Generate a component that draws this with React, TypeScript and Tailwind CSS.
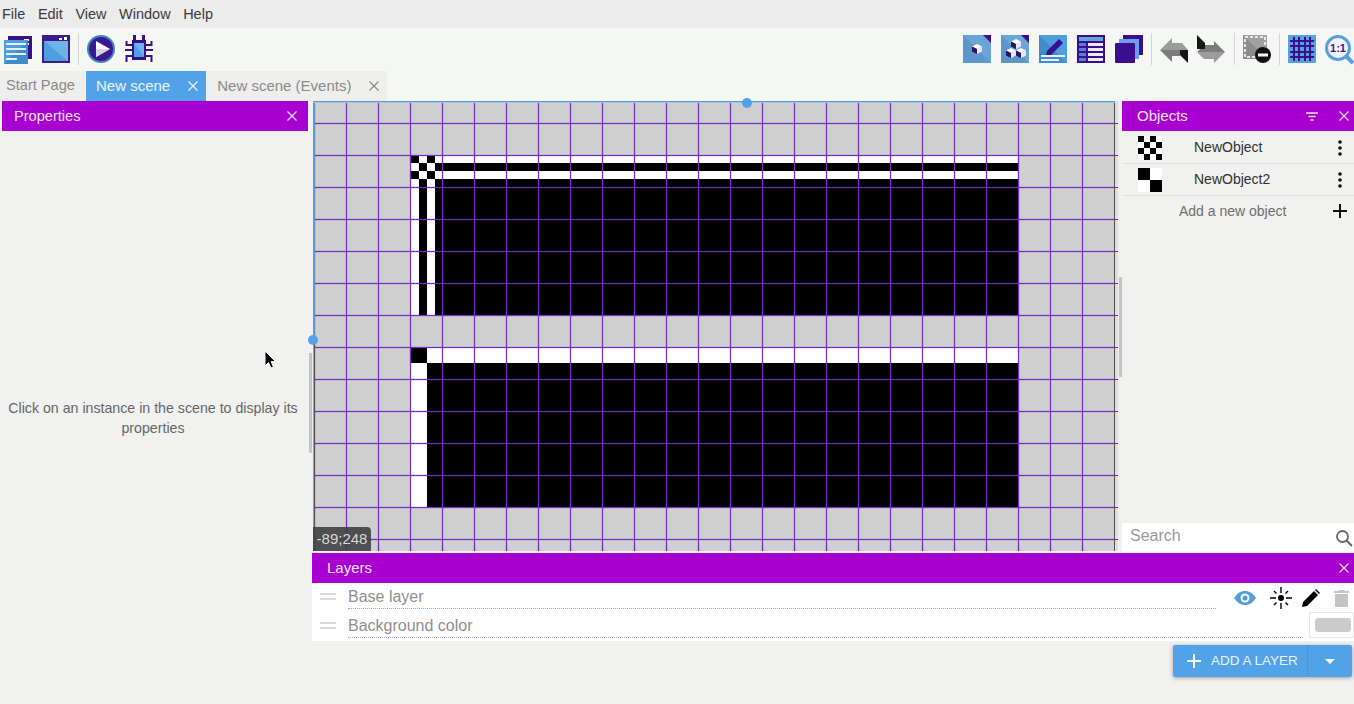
import type { ReactNode } from 'react';

const font = { fontFamily: '"Liberation Sans", Arial, sans-serif' };

const menuItems = ['File', 'Edit', 'View', 'Window', 'Help'];

function Icon({ children }: { children: ReactNode }) {
  return (
    <svg width="28" height="28" viewBox="0 0 28 28" className="shrink-0 overflow-visible">
      {children}
    </svg>
  );
}

function Sep() {
  return <div className="h-8 w-px shrink-0 bg-[#d4d6d4]" />;
}

function ToolTile({ children }: { children?: ReactNode }) {
  return (
    <Icon>
      <rect width="28" height="28" fill="#6aa5d6" />
      <polygon points="0,0 28,28 0,28" fill="#5b97ca" />
      <polygon points="20,0 28,0 28,8" fill="#3a0f8e" />
      {children}
    </Icon>
  );
}

function Cube({ x, y }: { x: number; y: number }) {
  return (
    <g transform={`translate(${x} ${y})`}>
      <polygon points="5,0 10,2.5 5,5 0,2.5" fill="#fff" />
      <polygon points="0,2.5 5,5 5,10 0,7.5" fill="#2c1168" />
      <polygon points="10,2.5 5,5 5,10 10,7.5" fill="#e8e8f4" />
    </g>
  );
}

function LeftTools() {
  return (
    <div className="flex items-center">
      <div className="ml-1 flex gap-[10px]">
        <Icon>
          <rect x="4" y="1" width="24" height="23" fill="#3a0f8e" />
          <rect x="20" y="4" width="5" height="2" fill="#fff" />
          <rect x="20" y="8" width="5" height="2" fill="#fff" />
          <rect x="0" y="5" width="24" height="24" fill="#4f9fe0" />
          <polygon points="24,5 24,29 0,29" fill="#3f8ccc" />
          <rect x="2" y="8" width="20" height="2" fill="#e6f2fb" />
          <rect x="2" y="13" width="20" height="2" fill="#e6f2fb" />
          <rect x="2" y="18" width="20" height="2" fill="#e6f2fb" />
          <rect x="2" y="23" width="11" height="2" fill="#e6f2fb" />
        </Icon>
        <Icon>
          <rect width="28" height="28" fill="#3d1a8e" />
          <rect x="2" y="6" width="24" height="20" fill="#6fb3e8" />
          <polygon points="2,6 26,26 2,26" fill="#4f9fe0" />
          <rect x="17" y="3" width="3" height="2" fill="#fff" />
          <rect x="22" y="2" width="3" height="3" fill="#fff" />
        </Icon>
      </div>
      <div className="mx-2 h-8 w-px bg-[#d4d6d4]" />
      <div className="flex gap-[10px]">
        <Icon>
          <circle cx="14" cy="14" r="14" fill="#3f84c4" />
          <circle cx="14" cy="14" r="12" fill="#3a1a8c" />
          <polygon points="9,6 23,14 9,22" fill="#fff" />
          <polygon points="9,14 23,14 9,22" fill="#d8cfe8" />
        </Icon>
        <Icon>
          <rect x="8" y="0" width="3" height="6" fill="#3a0f8e" />
          <rect x="17" y="0" width="3" height="6" fill="#3a0f8e" />
          <path d="M7 10H1.500V6M21 10h5.500V6M7 15H0M21 15h7M7 21H1.500v6M21 21h5.500v6" fill="none" stroke="#3a0f8e" strokeWidth="2" />
          <rect x="7" y="5" width="14" height="20" fill="#3a0f8e" />
          <rect x="9" y="8" width="10" height="14" fill="#4f9fe0" />
          <polygon points="9,8 19,8 19,22" fill="#6fb3e8" />
        </Icon>
      </div>
    </div>
  );
}

function RightTools() {
  return (
    <div className="flex items-center pr-px">
      <div className="flex gap-[10px]">
        <ToolTile>
          <Cube x={9} y={9} />
        </ToolTile>
        <ToolTile>
          <Cube x={10} y={4} />
          <Cube x={5} y={13} />
          <Cube x={15} y={13} />
        </ToolTile>
        <Icon>
          <rect width="28" height="28" fill="#4f9fe0" />
          <polygon points="0,0 28,28 0,28" fill="#3f8ccc" />
          <polygon points="8,16 20,4 24,8 12,20 7,21" fill="#3a0f8e" />
          <rect x="2" y="20" width="24" height="2" fill="#e6f2fb" />
          <rect x="2" y="24" width="18" height="2" fill="#e6f2fb" />
        </Icon>
        <Icon>
          <rect width="28" height="28" fill="#3a0f8e" />
          <rect x="2" y="2" width="24" height="4" fill="#6aa5d6" />
          <rect x="2" y="8" width="7" height="3" fill="#5b7fd6" />
          <rect x="2" y="13" width="7" height="3" fill="#5b7fd6" />
          <rect x="2" y="18" width="7" height="3" fill="#5b7fd6" />
          <rect x="2" y="23" width="7" height="3" fill="#5b7fd6" />
          <rect x="11" y="8" width="15" height="3" fill="#f0e8fa" />
          <rect x="11" y="13" width="15" height="3" fill="#f0e8fa" />
          <rect x="11" y="18" width="15" height="3" fill="#f0e8fa" />
          <rect x="11" y="23" width="15" height="3" fill="#f0e8fa" />
        </Icon>
        <Icon>
          <rect x="8" y="0" width="20" height="20" fill="#3a0f8e" />
          <rect x="4" y="4" width="20" height="20" fill="#6f9fe8" />
          <rect x="0" y="8" width="20" height="20" rx="1" fill="#3a0f8e" />
        </Icon>
      </div>
      <div className="mx-[8px]"><Sep /></div>
      <div className="flex gap-[9px]">
        <Icon>
          <polygon points="0,15 12,3 12,8 22,8 28,15" fill="#9c9c9c" />
          <polygon points="0,15 20,15 20,21 12,21 12,27" fill="#7c7c7c" />
          <polygon points="20,15 28,15 28,28 20,20" fill="#161616" />
        </Icon>
        <Icon>
          <polygon points="0,17 7,10 17,10 17,6 28,17" fill="#7c7c7c" />
          <polygon points="0,17 28,17 17,28 17,24 7,24" fill="#9c9c9c" />
          <polygon points="0,0 8,8 8,14 0,14" fill="#161616" />
        </Icon>
      </div>
      <div className="ml-[9px] mr-[8px]"><Sep /></div>
      <Icon>
        <rect width="24" height="24" fill="#8c8c8c" />
        <polygon points="0,0 24,0 24,24" fill="#a0a0a0" />
        <rect x="2" y="2" width="20" height="20" fill="none" stroke="#e8e8e8" strokeWidth="2" strokeDasharray="3 2" />
        <circle cx="20" cy="20" r="8" fill="#111" />
        <rect x="15" y="18.500" width="10" height="3" fill="#fff" />
      </Icon>
      <div className="mx-[8px]"><Sep /></div>
      <div className="flex gap-[9px]">
        <Icon>
          <rect width="28" height="28" fill="#5aa0e0" />
          <path d="M6 2v24M11 2v24M17 2v24M22 2v24M2 6h24M2 11h24M2 17h24M2 22h24" stroke="#3a0f8e" strokeWidth="2" />
        </Icon>
        <Icon>
          <circle cx="13" cy="13" r="11.500" fill="#f4f2fa" stroke="#5aa0e0" strokeWidth="3" />
          <path d="M21 21l7 7" stroke="#5aa0e0" strokeWidth="4" />
          <text x="13" y="17" textAnchor="middle" fontSize="11" fontWeight="700" fill="#3a1a8c" style={font}>1:1</text>
        </Icon>
      </div>
    </div>
  );
}

function CloseIcon({ className }: { className: string }) {
  return (
    <svg width="10" height="10" viewBox="0 0 10 10" className={className}>
      <path d="M0.500 0.500l9 9M9.500 0.500l-9 9" stroke="currentColor" strokeWidth="1.200" fill="none" />
    </svg>
  );
}

function PanelHeader({ title, inset, children }: { title: string; inset: string; children?: ReactNode }) {
  return (
    <div className="flex h-[30px] shrink-0 items-center justify-between bg-[#a800d0] text-[15px] text-[#f4e4f8]">
      <span className={inset}>{title}</span>
      <div className="flex items-center">{children}</div>
    </div>
  );
}

function Tab({ label, active, closable }: { label: string; active?: boolean; closable?: boolean }) {
  return (
    <div className={`flex h-[30px] items-center ${active ? 'bg-[#52a2e8] text-[#eaf4fc]' : 'bg-[#eeeeec] text-[#8a8a8a]'} ${closable ? '' : 'w-[86px] text-[14.600px]'}`}>
      <span className={active ? 'ml-[10px]' : closable ? 'ml-[11px]' : 'ml-[6px]'}>{label}</span>
      {closable && <CloseIcon className="ml-[18px] mr-[8px]" />}
    </div>
  );
}

function SceneCanvas() {
  const verticals = Array.from({ length: 25 }, (_, i) => 314.5 + i * 32);
  const horizontals = Array.from({ length: 14 }, (_, i) => 123.5 + i * 32);
  return (
    <svg width="805" height="450" viewBox="313 101 805 450" className="ml-px block shrink-0">
      <rect x="313" y="101" width="805" height="450" fill="#cfcfcf" />

      {/* first sprite, tiled */}
      <rect x="411" y="155" width="607" height="160" fill="#000" />
      <rect x="411" y="155" width="607" height="8" fill="#fff" />
      <rect x="411" y="171" width="607" height="8" fill="#fff" />
      <rect x="411" y="155" width="8" height="160" fill="#fff" />
      <rect x="427" y="155" width="8" height="160" fill="#fff" />
      <rect x="411" y="155" width="8" height="8" fill="#000" />
      <rect x="427" y="155" width="8" height="8" fill="#000" />
      <rect x="419" y="163" width="8" height="8" fill="#000" />
      <rect x="411" y="171" width="8" height="8" fill="#000" />
      <rect x="427" y="171" width="8" height="8" fill="#000" />
      <rect x="419" y="179" width="8" height="136" fill="#000" />

      {/* second sprite, tiled */}
      <rect x="411" y="347" width="607" height="160" fill="#000" />
      <rect x="427" y="347" width="591" height="16" fill="#fff" />
      <rect x="411" y="363" width="16" height="144" fill="#fff" />

      {/* grid, soft edge as in the reference */}
      {verticals.map((x) => (
        <line key={x} x1={x} y1="101" x2={x} y2="551" stroke="#7030c8" strokeOpacity="0.12" strokeWidth="3" />
      ))}
      {horizontals.map((y) => (
        <line key={y} x1="313" y1={y} x2="1118" y2={y} stroke="#7030c8" strokeOpacity="0.12" strokeWidth="3" />
      ))}
      {verticals.map((x) => (
        <line key={x} x1={x} y1="101" x2={x} y2="551" stroke="#7030c8" />
      ))}
      {horizontals.map((y) => (
        <line key={y} x1="313" y1={y} x2="1118" y2={y} stroke="#7030c8" />
      ))}

      <rect x="1114" y="101" width="1" height="450" fill="#505050" />
      <rect x="1115" y="101" width="3" height="450" fill="#dedede" />
      <path d="M1115 123.500h3M1115 155.500h3M1115 187.500h3M1115 219.500h3M1115 251.500h3M1115 283.500h3M1115 315.500h3M1115 347.500h3M1115 379.500h3M1115 411.500h3M1115 443.500h3M1115 475.500h3M1115 507.500h3M1115 539.500h3" stroke="#7030c8" />
      <rect x="313" y="340" width="1" height="211" fill="#7fa5c4" />
      <rect x="314" y="340" width="1" height="211" fill="#505050" />
      <rect x="313" y="101" width="2" height="239" fill="#5a9ad2" />
      <rect x="313" y="101" width="802" height="1" fill="#5a9ad2" />
      <rect x="313" y="102" width="802" height="1" fill="#a8c4da" />
    </svg>
  );
}

function ObjectRow({ name, sprite }: { name: string; sprite: ReactNode }) {
  return (
    <div className="flex h-8 items-center border-b border-[#e0e0e0]">
      <svg width="24" height="24" viewBox="0 0 24 24" className="ml-[16px] shrink-0">{sprite}</svg>
      <span className="ml-[32px] flex-1 text-[14px] text-[#303030]">{name}</span>
      <svg width="4" height="16" viewBox="0 0 4 16" className="mr-[12px]">
        <circle cx="2" cy="2" r="1.800" fill="#111" />
        <circle cx="2" cy="8" r="1.800" fill="#111" />
        <circle cx="2" cy="14" r="1.800" fill="#111" />
      </svg>
    </div>
  );
}

function LayerRow({ label, width, children }: { label: string; width: string; children: ReactNode }) {
  return (
    <div className="flex h-[29px] items-start">
      <div className="ml-2 mt-[10px] flex w-4 flex-col gap-[3px]">
        <div className="h-[2px] bg-[#d8d8d8]" />
        <div className="h-[2px] bg-[#d8d8d8]" />
      </div>
      <div className={`ml-3 h-[26px] border-b border-dotted border-[#a8a8a8] text-[16px] leading-[28px] text-[#8e8e8e] ${width}`}>{label}</div>
      {children}
    </div>
  );
}

export default function App() {
  return (
    <div className="relative flex h-[704px] w-[1354px] flex-col overflow-hidden bg-[#f1f1ef]" style={font}>
      <div className="flex h-[28px] shrink-0 items-center gap-[12.500px] bg-[#ececec] pl-[2px] pt-[2px] text-[14.500px] text-[#3a3a3a]">
        {menuItems.map((item) => (
          <span key={item}>{item}</span>
        ))}
      </div>

      <div className="flex h-[42px] shrink-0 items-center justify-between bg-[#f5f7f5]">
        <LeftTools />
        <RightTools />
      </div>

      <div className="flex h-[31px] shrink-0 items-end bg-[#f5f7f5] text-[15px]">
        <Tab label="Start Page" />
        <Tab label="New scene" active closable />
        <Tab label="New scene (Events)" closable />
      </div>

      <div className="flex min-h-0 flex-1 bg-[#f1f1ef]">
        <div className="ml-[2px] flex w-[306px] shrink-0 flex-col">
          <PanelHeader title="Properties" inset="pl-[12px] pt-[2px] text-[14.600px]">
            <CloseIcon className="mr-[11px]" />
          </PanelHeader>
          <div className="flex flex-1 items-center justify-center pl-[5px] pr-[9px] pt-[1px] text-center text-[14.200px] leading-[20px] text-[#666]">
            <p>Click on an instance in the scene to display its properties</p>
          </div>
        </div>

        <div className="flex w-[4px] shrink-0 flex-col items-center pt-[252px]">
          <div className="h-[100px] w-[3px] bg-[#c4c4c4]" />
        </div>

        <div className="flex min-w-0 flex-1 flex-col">
          <div className="flex h-[452px] shrink-0">
            <SceneCanvas />
            <div className="flex w-[4px] shrink-0 flex-col items-center pt-[176px]">
              <div className="h-[100px] w-[3px] bg-[#c4c4c4]" />
            </div>
            <div className="flex w-[232px] shrink-0 flex-col">
              <PanelHeader title="Objects" inset="pl-[15px]">
                <svg width="12" height="9" viewBox="0 0 12 9" className="mr-[21px]">
                  <path d="M0 1h12M2.500 4.500h7M4.500 8h3" stroke="#f4e4f8" strokeWidth="1.400" />
                </svg>
                <CloseIcon className="mr-[5px]" />
              </PanelHeader>
              <div className="mt-px">
                <ObjectRow
                  name="NewObject"
                  sprite={
                    <>
                      <rect width="24" height="24" fill="#fff" />
                      <path d="M0 0h6v6H0zM12 0h6v6h-6zM6 6h6v6H6zM18 6h6v6h-6zM0 12h6v6H0zM12 12h6v6h-6zM6 18h6v6H6zM18 18h6v6h-6z" fill="#000" />
                    </>
                  }
                />
                <ObjectRow
                  name="NewObject2"
                  sprite={
                    <>
                      <rect width="24" height="24" fill="#fff" />
                      <path d="M0 0h12v12H0zM12 12h12v12H12z" fill="#000" />
                    </>
                  }
                />
              </div>
              <div className="flex h-[30px] items-center text-[14px] text-[#6e6e6e]">
                <span className="ml-[57px] flex-1">Add a new object</span>
                <svg width="14" height="14" viewBox="0 0 14 14" className="mr-[7px]">
                  <path d="M7 0v14M0 7h14" stroke="#111" strokeWidth="2" />
                </svg>
              </div>
              <div className="flex-1" />
              <div className="mb-px flex h-[29px] shrink-0 items-center bg-white pl-2 text-[16px] text-[#9a9a9a]">
                <span className="flex-1 pb-[3px]">Search</span>
                <svg width="18" height="18" viewBox="0 0 18 18" className="mr-[1px]">
                  <circle cx="7.500" cy="7.500" r="5.500" fill="none" stroke="#666" strokeWidth="1.800" />
                  <path d="M11.500 11.500l5.500 5.500" stroke="#666" strokeWidth="2" />
                </svg>
              </div>
            </div>
          </div>

          <PanelHeader title="Layers" inset="pl-[15px]">
            <CloseIcon className="mr-[5px]" />
          </PanelHeader>

          <div className="flex h-[58px] shrink-0 flex-col bg-white">
            <LayerRow label="Base layer" width="w-[868px]">
              <div className="ml-[18px] flex h-[29px] items-center">
                <svg width="22" height="14" viewBox="0 0 22 14">
                  <path d="M0 7C3 2.500 6.500 0 11 0s8 2.500 11 7c-3 4.500-6.500 7-11 7S3 11.500 0 7z" fill="#4f9fe0" />
                  <circle cx="11" cy="7" r="4.500" fill="#fff" />
                  <circle cx="11" cy="7" r="2.500" fill="#4f9fe0" />
                </svg>
                <svg width="22" height="22" viewBox="0 0 22 22" className="ml-[14px]">
                  <circle cx="11" cy="11" r="3" fill="#000" />
                  <path d="M11 0v6M11 16v6M0 11h6M16 11h6M4 4l2.500 2.500M15.500 15.500L18 18M18 4l-2.500 2.500M6.500 15.500L4 18" stroke="#000" strokeWidth="1.400" />
                </svg>
                <svg width="18" height="18" viewBox="0 0 18 18" className="ml-[10px]">
                  <path d="M0 18l1-5L12 2l4 4L5 17zM13 1l1-1 4 4-1 1z" fill="#000" />
                </svg>
                <svg width="15" height="18" viewBox="0 0 15 18" className="ml-[14px]">
                  <path d="M0 2h4l1-1h5l1 1h4v2H0zM1 5h13v12a1 1 0 0 1-1 1H2a1 1 0 0 1-1-1z" fill="#c4c4c4" />
                </svg>
              </div>
            </LayerRow>
            <LayerRow label="Background color" width="w-[955px]">
              <div className="ml-[6px] flex h-[26px] w-[45px] shrink-0 items-center border border-[#e8e8e8] pl-[5px]">
                <div className="h-[14px] w-[36px] rounded-[3px] bg-[#cbcbcb]" />
              </div>
            </LayerRow>
          </div>

          <div className="flex flex-1 items-start justify-end pt-[4px] pr-[2px]">
            <div className="flex h-[32px] w-[179px] items-stretch rounded-[2px] bg-[#52a2e8] text-[13.500px] text-[#e8f3fc] shadow-[0_1px_4px_rgba(0,0,0,0.35)]">
              <div className="flex flex-1 items-center border-r border-[#4a94d6] pl-[14px]">
                <svg width="14" height="14" viewBox="0 0 14 14">
                  <path d="M7 0v14M0 7h14" stroke="#f2f8fd" strokeWidth="2" />
                </svg>
                <span className="ml-[10px]">ADD A LAYER</span>
              </div>
              <div className="flex w-[44px] items-center justify-center">
                <svg width="10" height="5" viewBox="0 0 10 5">
                  <polygon points="0,0 10,0 5,5" fill="#f2f8fd" />
                </svg>
              </div>
            </div>
          </div>
        </div>
      </div>

      {/* overlays on the canvas */}
      <div className="absolute left-[742px] top-[98px] h-[10px] w-[10px] rounded-full bg-[#52a2e8]" />
      <div className="absolute left-[308px] top-[335px] h-[10px] w-[10px] rounded-full bg-[#52a2e8]" />
      <div className="absolute left-[313px] top-[527px] flex h-[24px] w-[58px] items-center justify-center rounded-tr-[4px] bg-[#404040]/90 text-[15px] text-[#d8d8d8]">-89;248</div>
      <svg width="12" height="20" viewBox="0 0 12 20" className="absolute left-[264px] top-[350px]">
        <path d="M1 1v15l3.500-3.500L7 18l2.500-1-2.500-5.500h4.500z" fill="#000" stroke="#fff" strokeWidth="1" />
      </svg>
    </div>
  );
}
